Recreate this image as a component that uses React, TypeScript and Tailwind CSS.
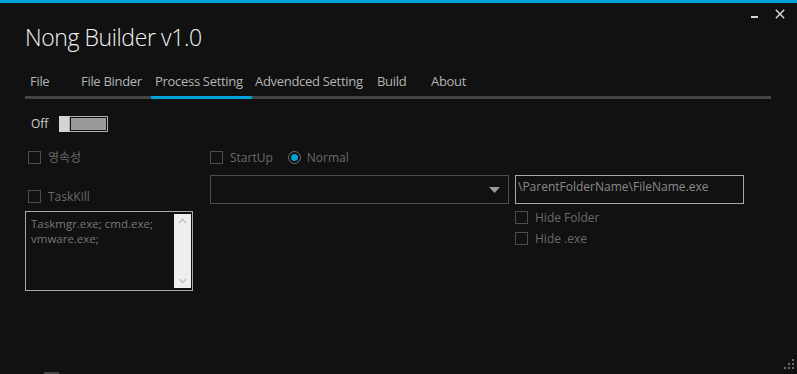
import React from "react";

const font = { fontFamily: '"Open Sans", "Noto Sans", "Noto Sans CJK KR", sans-serif' };

function Check({ label, className = "" }: { label: string; className?: string }) {
  return (
    <div className={"flex items-center h-[13px] " + className}>
      <div className="w-[13px] h-[13px] border border-[#4d4d4d] shrink-0" />
      <span className="ml-[7px] text-[12px] leading-none text-[#6a6a6a] whitespace-nowrap">{label}</span>
    </div>
  );
}

export default function App() {
  const tabs = [
    { t: "File", w: "w-[52px]", pl: "pl-[5px]" },
    { t: "File Binder", w: "w-[74px]", pl: "pl-[4px]" },
    { t: "Process Setting", w: "w-[101px]", pl: "pl-[4px]", active: true },
    { t: "Advendced Setting", w: "w-[121px]", pl: "pl-[3px]" },
    { t: "Build", w: "w-[54px]", pl: "pl-[4px]" },
    { t: "About", w: "w-[60px]", pl: "pl-[4px]" },
  ];
  return (
    <div className="w-[797px] h-[374px] bg-[#111111] relative overflow-hidden border-t-[3px] border-[#00a3d9]" style={font}>
      {/* window buttons */}
      <div className="absolute top-[13px] left-[751px] w-[7px] h-[2px] bg-[#d8d8d8]" />
      <svg className="absolute top-[6px] left-[775px]" width="10" height="10" viewBox="0 0 10 10">
        <path d="M0.8 0.8 L9.2 9.2 M9.2 0.8 L0.8 9.2" stroke="#dcdcdc" strokeWidth="1.4" />
      </svg>

      <div className="pl-[25px]">
        <div className="pt-[19px] h-[58px] text-[23px] font-light text-[#f2f2f2] leading-[30px] tracking-[-0.4px]">Nong Builder v1.0</div>

        <div className="flex w-[746px] border-b-[3px] border-[#444444] h-[38px] items-end">
          {tabs.map((tb) => (
            <div
              key={tb.t}
              className={
                tb.w + " " + tb.pl + " -mb-[3px] border-b-[3px] h-[41px] pt-[13px] text-[13px] leading-[20px] whitespace-nowrap text-[#b4b4b4] tracking-[-0.3px] " +
                (tb.active ? "border-[#00a3d9]" : "border-transparent")
              }
            >
              {tb.t}
            </div>
          ))}
        </div>

        {/* toggle */}
        <div className="flex items-center mt-[17px] h-[16px]">
          <span className="ml-[6px] text-[12px] leading-none text-[#d0d0d0]">Off</span>
          <div className="ml-[11px] w-[49px] h-[16px] flex">
            <div className="w-[10px] h-full bg-[#d4d4d4]" />
            <div className="flex-1 border border-[#b0b0b0] p-[1px]">
              <div className="w-full h-full bg-[#999999]" />
            </div>
          </div>
        </div>

        <div className="flex mt-[19px]">
          {/* left column */}
          <div className="w-[168px] flex flex-col">
            <Check label="영속성" className="ml-[3px]" />
            <Check label="TaskKill" className="ml-[3px] mt-[26px]" />
            <div className="mt-[8px] w-[168px] h-[80px] border border-[#a8a8a8] flex">
              <div className="flex-1 pl-[5px] pt-[4px] text-[11.5px] leading-[15px] text-[#777777]">
                <div className="h-[15px]">Taskmgr.exe; cmd.exe;</div>
                <div className="h-[15px]">vmware.exe;</div>
              </div>
              <div className="w-[17px] mr-[1px] my-[2px] bg-[#efefef] flex flex-col justify-between items-center py-[4px]">
                <svg width="9" height="6" viewBox="0 0 9 6">
                  <path d="M1 5 L4.5 1.5 L8 5" stroke="#c4c4c4" strokeWidth="1.6" fill="none" />
                </svg>
                <svg width="9" height="6" viewBox="0 0 9 6">
                  <path d="M1 1 L4.5 4.5 L8 1" stroke="#c4c4c4" strokeWidth="1.6" fill="none" />
                </svg>
              </div>
            </div>
          </div>

          {/* right area */}
          <div className="ml-[17px] flex flex-col">
            <div className="flex items-center h-[13px]">
              <Check label="StartUp" />
              <div className="ml-[15px] w-[13px] h-[13px] rounded-full border border-[#707070] flex items-center justify-center">
                <div className="w-[7px] h-[7px] rounded-full bg-[#00a3d9]" />
              </div>
              <span className="ml-[6px] text-[12px] leading-none text-[#6a6a6a]">Normal</span>
            </div>
            <div className="flex mt-[11px]">
              <div className="w-[299px] h-[29px] border border-[#4d4d4d] flex items-center justify-end pr-[8px]">
                <svg width="11" height="6" viewBox="0 0 11 6">
                  <path d="M0 0 H11 L5.5 6 Z" fill="#9a9a9a" />
                </svg>
              </div>
              <div className="ml-[6px] flex flex-col">
                <div className="w-[229px] h-[29px] border border-[#a8a8a8] pl-[2px] pt-[2px] text-[12px] leading-[17px] text-[#8a8a8a] whitespace-nowrap">
                  \ParentFolderName\FileName.exe
                </div>
                <Check label="Hide Folder" className="mt-[7px]" />
                <Check label="Hide .exe" className="mt-[8px]" />
              </div>
            </div>
          </div>
        </div>
      </div>

      {/* bottom-left fragment */}
      <div className="absolute bottom-0 left-[44px] w-[15px] h-[2px] bg-[#444444]" />

      {/* resize grip */}
      <svg className="absolute right-[3px] bottom-[5px]" width="10" height="10" viewBox="0 0 10 10">
        <rect x="8" y="0" width="2" height="2" fill="#6a6a6a" />
        <rect x="4" y="4" width="2" height="2" fill="#6a6a6a" />
        <rect x="8" y="4" width="2" height="2" fill="#6a6a6a" />
        <rect x="0" y="8" width="2" height="2" fill="#6a6a6a" />
        <rect x="4" y="8" width="2" height="2" fill="#6a6a6a" />
        <rect x="8" y="8" width="2" height="2" fill="#6a6a6a" />
      </svg>
    </div>
  );
}
